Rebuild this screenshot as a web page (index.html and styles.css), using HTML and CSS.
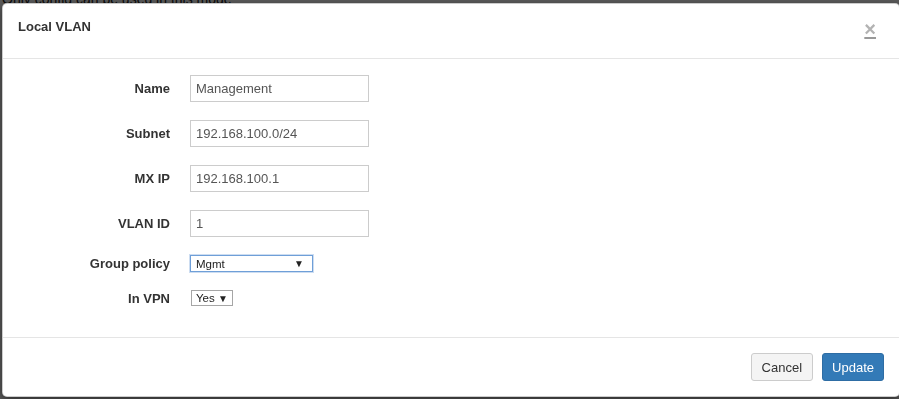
FILE: index.html
```html
<!DOCTYPE html>
<html lang="en">
<head>
  <meta charset="UTF-8">
  <title>Local VLAN</title>
  <link rel="stylesheet" href="styles.css">
</head>
<body>

  <!-- page behind the dialog -->
  <div class="page">
    <p class="page-note">Only config can be used in this mode</p>
  </div>

  <div class="backdrop">
    <div class="modal">
      <div class="modal-header">
        <h4 class="modal-title">Local VLAN</h4>
        <a href="#" class="close">&times;</a>
      </div>

      <form class="modal-body">
        <label class="form-label" for="vlan-name">Name</label>
        <input class="form-input" id="vlan-name" type="text" value="Management">

        <label class="form-label" for="vlan-subnet">Subnet</label>
        <input class="form-input" id="vlan-subnet" type="text" value="192.168.100.0/24">

        <label class="form-label" for="vlan-ip">MX IP</label>
        <input class="form-input" id="vlan-ip" type="text" value="192.168.100.1">

        <label class="form-label" for="vlan-id">VLAN ID</label>
        <input class="form-input" id="vlan-id" type="text" value="1">

        <span class="form-label">Group policy</span>
        <div class="select select-wide focused">
          <span>Mgmt</span><span class="caret">&#9660;</span>
        </div>

        <span class="form-label">In VPN</span>
        <div class="select">
          <span>Yes</span><span class="caret">&#9660;</span>
        </div>
      </form>

      <div class="modal-footer">
        <button type="button" class="btn btn-default">Cancel</button>
        <button type="button" class="btn btn-primary">Update</button>
      </div>
    </div>
  </div>

</body>
</html>
```

FILE: styles.css
```css
*, *::before, *::after { box-sizing: border-box; margin: 0; padding: 0; }

body {
  font-family: "Liberation Sans", Arial, sans-serif;
  font-size: 13px;
  color: #333;
  background: #fff;
  overflow: hidden;
}

/* content behind the overlay */
.page { padding: 0 0 0 2px; margin-top: -9px; }
.page-note { font-size: 14px; line-height: 16px; color: #222; }

.backdrop {
  position: fixed;
  inset: 0;
  background: rgba(0,0,0,0.65);
  padding: 3px 0 0 2px;
}

.modal {
  width: 898px;
  height: 394px;
  background: #fff;
  border: 1px solid rgba(0,0,0,0.2);
  border-radius: 5px;
  box-shadow: 0 3px 9px rgba(0,0,0,0.5);
  display: flex;
  flex-direction: column;
}

/* Header */
.modal-header {
  display: flex;
  justify-content: space-between;
  align-items: flex-start;
  height: 55px;
  padding: 13px 23px 0 15px;
  border-bottom: 1px solid #e5e5e5;
}
.modal-title { font-size: 13px; line-height: 20px; font-weight: bold; color: #333; }
.close {
  font-size: 20px;
  line-height: 20px;
  font-weight: bold;
  color: #b3b3b3;
  text-decoration: underline;
  text-decoration-color: #999;
  margin-top: 2px;
}

/* Body */
.modal-body {
  flex: 1;
  display: grid;
  grid-template-columns: 167px auto;
  justify-content: start;
  align-items: center;
  column-gap: 20px;
  row-gap: 18px;
  padding: 16px 0 0 0;
  align-content: start;
}
.form-label { text-align: right; font-weight: bold; color: #333; }

.form-input {
  width: 179px;
  height: 27px;
  padding: 0 5px;
  border: 1px solid #ccc;
  font-family: inherit;
  font-size: 13px;
  color: #555;
  outline: none;
}

.select {
  display: flex;
  justify-content: space-between;
  align-items: center;
  width: 42px;
  height: 16px;
  margin-left: 1px;
  padding: 0 4px 0 4px;
  border: 1px solid #a6a6a6;
  font-size: 11.5px;
  color: #222;
  background: #fff;
}
.select-wide { width: 123px; height: 17px; margin-left: 0; padding: 0 8px 0 5px; }
.select.focused { border-color: #6f9fd8; box-shadow: 0 0 0 1px rgba(111,159,216,0.35); }
.caret { font-size: 10px; color: #222; }

/* Footer */
.modal-footer {
  display: flex;
  justify-content: flex-end;
  gap: 9px;
  padding: 15px 15px 15px;
  border-top: 1px solid #e5e5e5;
}
.btn {
  height: 28px;
  padding: 0 10px;
  font-family: inherit;
  font-size: 13px;
  border-radius: 3px;
  border: 1px solid #ccc;
  cursor: pointer;
}
.btn-default { background: #f4f4f4; color: #333; }
.btn-primary { background: #337ab7; border-color: #2e6da4; color: #fff; padding: 0 9px; }
```
